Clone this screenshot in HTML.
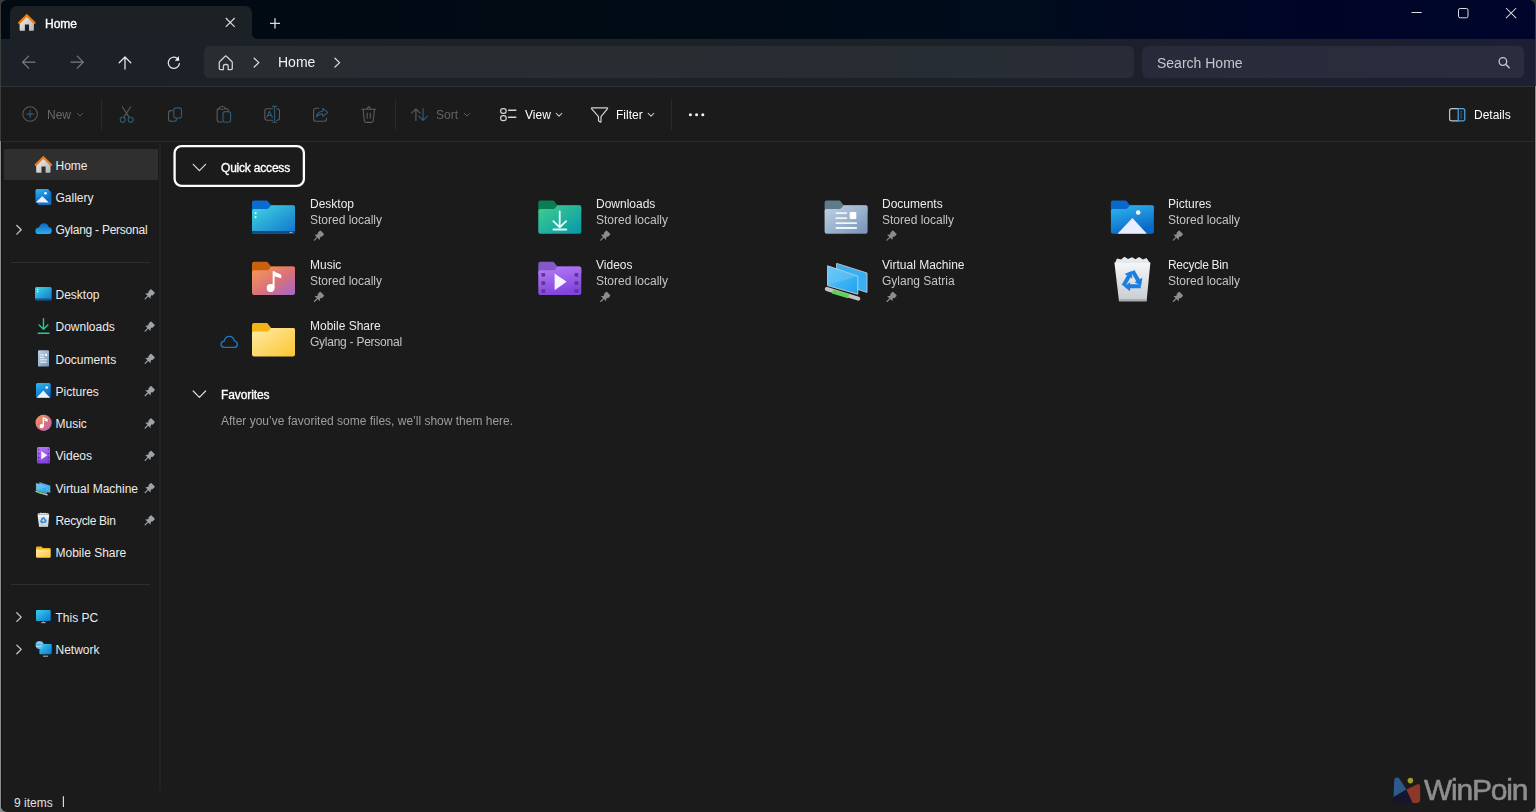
<!DOCTYPE html>
<html><head><meta charset="utf-8">
<style>
*{margin:0;padding:0;box-sizing:border-box}
html,body{width:1536px;height:812px;overflow:hidden;background:#8c8c8c;font-family:"Liberation Sans",sans-serif;color:#fff}
#win{position:absolute;left:0;top:0;width:1536px;height:812px;clip-path:inset(0 1px 0 1px round 6px);background:#1b1b1b}
.a{position:absolute}
.t{position:absolute;white-space:nowrap;font-size:12px;line-height:12px;will-change:transform}
.ct{will-change:auto}
#title{left:0;top:0;width:1536px;height:39px;background:linear-gradient(90deg,#020a12 0%,#010b15 40%,#000c1c 66%,#000528 86%,#01052c 100%)}
#nav{left:0;top:39px;width:1536px;height:47px;background:linear-gradient(90deg,#1b2126 0%,#1c2227 40%,#1d2129 66%,#1d202e 86%,#1d2033 100%)}
#tab{left:10px;top:6px;width:242px;height:34px;border-radius:7px 7px 0 0;background:#1c2126}
#tabfoot{left:252px;top:34px;width:5px;height:5px;background:radial-gradient(circle at 100% 0,transparent 4.5px,#1c2126 5px)}
#sep1{left:0;top:86px;width:1536px;height:1px;background:#2e3136}
#sep2{left:0;top:141px;width:1536px;height:1px;background:#2a2a2a}
#addr{left:204px;top:46px;width:930px;height:32px;border-radius:6px;background:linear-gradient(90deg,#272d30 0%,#272d31 45%,#282d35 88%,#282c37 100%)}
#search{left:1142px;top:46px;width:382px;height:32px;border-radius:6px;background:linear-gradient(90deg,#272b39,#292d3e)}
#sbborder{left:159px;top:142px;width:2px;height:648px;background:#222}
.sel{left:4px;top:149px;width:154px;height:31px;border-radius:1px;background:#2f2f2f}
.hsep{left:11px;width:139px;height:1px;background:#2e2e2e}
.st{color:#ececec}
.sub{color:#c4c4c4}
#lb{left:0;top:0;width:1px;height:812px;background:#5a5a5a}
#rb{left:1535px;top:0;width:1px;height:812px;background:#4a4a4a}
</style></head>
<body>
<div class="a" style="left:0;top:0;width:10px;height:141px;background:#3c3c3c"></div><div class="a" style="left:1526px;top:0;width:10px;height:86px;background:#383838"></div>
<div id="win">
<div id="title" class="a"></div>
<div id="nav" class="a"></div>
<div id="tab" class="a"></div>
<div id="tabfoot" class="a"></div>
<div id="sep1" class="a"></div>
<div id="sep2" class="a"></div>
<div id="addr" class="a"></div>
<div id="search" class="a"></div>
<div id="sbborder" class="a"></div>
<div class="a sel"></div>
<div class="a hsep" style="top:262px"></div>
<div class="a hsep" style="top:584px"></div>
<div class="t" style="left:45px;top:17.6px;-webkit-text-stroke:0.35px #fff">Home</div>
<div class="t" style="left:278px;top:55px;font-size:14px;line-height:14px;color:#f0f0f0">Home</div>
<div class="t" style="left:1157px;top:55.5px;font-size:14px;line-height:14px;color:#c6c8cc">Search Home</div>
<div class="t " style="left:47px;top:109.4px;color:#6a6a6a">New</div>
<div class="t " style="left:435.5px;top:109.4px;color:#646464">Sort</div>
<div class="t " style="left:524.5px;top:109.4px;">View</div>
<div class="t " style="left:615.5px;top:109.4px;">Filter</div>
<div class="t " style="left:1473.5px;top:109.4px;">Details</div>
<div class="t st ct" style="left:55.5px;top:159.7px;">Home</div>
<div class="t st ct" style="left:55.5px;top:192.0px;">Gallery</div>
<div class="t st ct" style="left:55.5px;top:224.3px;;letter-spacing:-0.25px">Gylang - Personal</div>
<div class="t st ct" style="left:55.5px;top:288.9px;">Desktop</div>
<div class="t st ct" style="left:55.5px;top:321.2px;">Downloads</div>
<div class="t st ct" style="left:55.5px;top:353.5px;">Documents</div>
<div class="t st ct" style="left:55.5px;top:385.8px;">Pictures</div>
<div class="t st ct" style="left:55.5px;top:418.1px;">Music</div>
<div class="t st ct" style="left:55.5px;top:450.4px;">Videos</div>
<div class="t st ct" style="left:55.5px;top:482.7px;">Virtual Machine</div>
<div class="t st ct" style="left:55.5px;top:515.0px;;letter-spacing:-0.3px">Recycle Bin</div>
<div class="t st ct" style="left:55.5px;top:547.3px;">Mobile Share</div>
<div class="t st ct" style="left:55.5px;top:611.9px;">This PC</div>
<div class="t st ct" style="left:55.5px;top:644.2px;">Network</div>
<div class="t " style="left:221px;top:161.6px;-webkit-text-stroke:0.35px #fff;letter-spacing:-0.2px">Quick access</div>
<div class="t st" style="left:309.5px;top:197.5px;">Desktop</div>
<div class="t sub" style="left:309.5px;top:213.7px;">Stored locally</div>
<div class="t st" style="left:595.8px;top:197.5px;">Downloads</div>
<div class="t sub" style="left:595.8px;top:213.7px;">Stored locally</div>
<div class="t st" style="left:882.1px;top:197.5px;">Documents</div>
<div class="t sub" style="left:882.1px;top:213.7px;">Stored locally</div>
<div class="t st" style="left:1168.4px;top:197.5px;">Pictures</div>
<div class="t sub" style="left:1168.4px;top:213.7px;">Stored locally</div>
<div class="t st" style="left:309.5px;top:258.8px;">Music</div>
<div class="t sub" style="left:309.5px;top:275.0px;">Stored locally</div>
<div class="t st" style="left:595.8px;top:258.8px;">Videos</div>
<div class="t sub" style="left:595.8px;top:275.0px;">Stored locally</div>
<div class="t st" style="left:882.1px;top:258.8px;">Virtual Machine</div>
<div class="t sub" style="left:882.1px;top:275.0px;">Gylang Satria</div>
<div class="t st" style="left:1168.4px;top:258.8px;;letter-spacing:-0.3px">Recycle Bin</div>
<div class="t sub" style="left:1168.4px;top:275.0px;">Stored locally</div>
<div class="t st" style="left:309.5px;top:320.1px;">Mobile Share</div>
<div class="t sub" style="left:309.5px;top:336.3px;;letter-spacing:-0.25px">Gylang - Personal</div>
<div class="t " style="left:221px;top:388.6px;-webkit-text-stroke:0.35px #fff;letter-spacing:-0.1px">Favorites</div>
<div class="t " style="left:221px;top:414.5px;color:#9d9d9d">After you’ve favorited some files, we’ll show them here.</div>
<div class="t ct" style="left:14px;top:796.6px;color:#e0e0e0">9 items</div>
<div class="t" style="left:1424px;top:775px;font-size:30px;line-height:30px;color:#8e8e8e;letter-spacing:-1.2px;-webkit-text-stroke:0.6px #8e8e8e">WinPoin</div>
<svg class="a" style="left:0;top:0" width="1536" height="812" viewBox="0 0 1536 812">
<defs>
<linearGradient id="gHouse" x1="0" y1="0" x2="1" y2="1"><stop offset="0" stop-color="#f0f0f0"/><stop offset="1" stop-color="#b4b4b4"/></linearGradient>
<linearGradient id="gDesk" x1="0" y1="0" x2="1" y2="1"><stop offset="0" stop-color="#3fd8e2"/><stop offset="1" stop-color="#1272cc"/></linearGradient>
<linearGradient id="gDown" x1="0" y1="0" x2="1" y2="1"><stop offset="0" stop-color="#3fd08e"/><stop offset="1" stop-color="#0796aa"/></linearGradient>
<linearGradient id="gDoc" x1="0" y1="0" x2="1" y2="1"><stop offset="0" stop-color="#c2d4e6"/><stop offset="1" stop-color="#7593b6"/></linearGradient>
<linearGradient id="gPic" x1="0" y1="0" x2="0.4" y2="1"><stop offset="0" stop-color="#31b8f0"/><stop offset="1" stop-color="#0868c8"/></linearGradient>
<linearGradient id="gMus" x1="0" y1="0" x2="1" y2="1"><stop offset="0" stop-color="#fa9b52"/><stop offset="0.55" stop-color="#d8727a"/><stop offset="1" stop-color="#a266cc"/></linearGradient>
<linearGradient id="gVid" x1="0" y1="0" x2="0.3" y2="1"><stop offset="0" stop-color="#b87ef6"/><stop offset="1" stop-color="#8244de"/></linearGradient>
<linearGradient id="gYel" x1="0" y1="0" x2="1" y2="1"><stop offset="0" stop-color="#ffeaa8"/><stop offset="1" stop-color="#fbc630"/></linearGradient>
<linearGradient id="gCloud" x1="0" y1="0" x2="0" y2="1"><stop offset="0" stop-color="#0c66c4"/><stop offset="1" stop-color="#2cb0f0"/></linearGradient>
<linearGradient id="gPC" x1="0" y1="0" x2="1" y2="1"><stop offset="0" stop-color="#3ad0ec"/><stop offset="1" stop-color="#0a78d2"/></linearGradient>
<linearGradient id="gVM" x1="0" y1="0" x2="1" y2="1"><stop offset="0" stop-color="#62c4f8"/><stop offset="1" stop-color="#1ea4f0"/></linearGradient>
<linearGradient id="gBin" x1="0" y1="0" x2="0" y2="1"><stop offset="0" stop-color="#f4f6f8"/><stop offset="1" stop-color="#c8ccd0"/></linearGradient>
</defs>
<g transform="translate(0,0)"><path d="M19.6 22.6 L26.8 16 L33.9 22.6 V30 Q33.9 30.8 33.1 30.8 H29 V24.6 H24.9 V30.8 H20.4 Q19.6 30.8 19.6 30 Z" fill="url(#gHouse)"/><path d="M19.2 22.9 L26.8 15.3 L34.4 22.9" fill="none" stroke="#f07a12" stroke-width="2.3" stroke-linecap="round" stroke-linejoin="round"/></g>
<path d="M225.8 18 L234.7 26.9 M234.7 18 L225.8 26.9" stroke="#dcdcdc" fill="none" stroke-width="1.15"/>
<path d="M270 23.4 H280 M275 18.3 V28.5" stroke="#dcdcdc" fill="none" stroke-width="1.3"/>
<path d="M1411.5 12.5 H1421.7" stroke="#dcdcdc" fill="none" stroke-width="1"/>
<rect x="1458.5" y="8.5" width="9.5" height="9.3" rx="1.6" stroke="#dcdcdc" fill="none" stroke-width="1"/>
<path d="M1506 8 L1516.2 18.2 M1516.2 8 L1506 18.2" stroke="#dcdcdc" fill="none" stroke-width="1.05"/>
<path d="M22.6 62.2 H35 M28.6 56.2 L22.6 62.2 L28.6 68.2" stroke="#7a7e84" stroke-width="1.2" fill="none" stroke-linecap="round" stroke-linejoin="round"/>
<path d="M71 62.2 H83.3 M77.3 56.2 L83.3 62.2 L77.3 68.2" stroke="#7a7e84" stroke-width="1.2" fill="none" stroke-linecap="round" stroke-linejoin="round"/>
<path d="M125 69 V57 M119.2 62.8 L125 57 L130.8 62.8" stroke="#e4e4e4" stroke-width="1.3" fill="none" stroke-linecap="round" stroke-linejoin="round"/>
<path d="M179.4 63.6 A5.6 5.6 0 1 1 176.7 58.0" stroke="#e4e4e4" stroke-width="1.3" fill="none" stroke-linecap="round" stroke-linejoin="round"/>
<path d="M178.7 56 L179.3 60.7 L174.8 60.7 Z" fill="#f0f0f0"/>
<path d="M219.3 68.6 V62.5 Q219.3 61.9 219.8 61.5 L225.2 56.2 Q225.8 55.7 226.4 56.2 L231.8 61.5 Q232.3 61.9 232.3 62.5 V68.6 Q232.3 69.7 231.2 69.7 H228.2 V66.3 Q228.2 64.5 226.4 64.5 H225.2 Q223.4 64.5 223.4 66.3 V69.7 H220.4 Q219.3 69.7 219.3 68.6 Z" stroke="#cfd2d4" stroke-width="1.3" fill="none" stroke-linecap="round" stroke-linejoin="round"/>
<path d="M254.2 58.2 L258.8 62.6 L254.2 67" stroke="#dcdcdc" stroke-width="1.3" fill="none" stroke-linecap="round" stroke-linejoin="round"/>
<path d="M335 58.2 L339.6 62.6 L335 67" stroke="#dcdcdc" stroke-width="1.3" fill="none" stroke-linecap="round" stroke-linejoin="round"/>
<circle cx="1502.9" cy="61.5" r="3.8" stroke="#cacaca" stroke-width="1.3" fill="none"/><path d="M1505.7 64.3 L1509.2 67.8" stroke="#cacaca" stroke-width="1.4" fill="none" stroke-linecap="round" stroke-linejoin="round"/>
<circle cx="30.1" cy="114" r="7.3" stroke="#5b5b5b" stroke-width="1.05" fill="none"/><path d="M26.8 114 H33.4 M30.1 110.7 V117.3" stroke="#2d5b7a" stroke-width="1.25" fill="none" stroke-linecap="round" stroke-linejoin="round"/>
<path d="M77.4 113.4 L80 116 L82.6 113.4" stroke="#5b5b5b" stroke-width="1" fill="none" stroke-linecap="round" stroke-linejoin="round"/>
<rect x="101" y="99" width="1" height="31" fill="#2a2a2a"/><rect x="395" y="99" width="1" height="31" fill="#2a2a2a"/><rect x="671" y="99" width="1" height="31" fill="#2a2a2a"/>
<path d="M122.3 106.8 L129.2 117.4 M130.7 106.8 L123.8 117.4" stroke="#5b5b5b" stroke-width="1.1" fill="none" stroke-linecap="round" stroke-linejoin="round"/><circle cx="122.7" cy="119.7" r="2.5" stroke="#2d5b7a" stroke-width="1.15" fill="none"/><circle cx="130.7" cy="119.7" r="2.5" stroke="#2d5b7a" stroke-width="1.15" fill="none"/>
<path d="M172.2 110.6 H170.9 Q168.6 110.6 168.6 112.9 V119 Q168.6 121.3 170.9 121.3 H174.4 Q176.4 121.3 176.6 119.4" stroke="#5b5b5b" stroke-width="1.1" fill="none" stroke-linecap="round" stroke-linejoin="round"/><rect x="173.8" y="107.8" width="7.7" height="10.3" rx="2.2" stroke="#2d5b7a" stroke-width="1.15" fill="none"/>
<path d="M219.7 108.6 H219.3 Q217.1 108.6 217.1 110.8 V119.8 Q217.1 122 219.3 122 H222.2 M224.6 108.6 H226.4 Q228.4 108.6 228.5 110.6" stroke="#5b5b5b" stroke-width="1.1" fill="none" stroke-linecap="round" stroke-linejoin="round"/><rect x="219.4" y="106.6" width="5.4" height="2.6" rx="1.3" stroke="#5b5b5b" stroke-width="1" fill="none"/><rect x="223" y="111.6" width="7.6" height="10.7" rx="2.2" stroke="#2d5b7a" stroke-width="1.15" fill="none"/>
<path d="M272.6 108.8 H267 Q264.8 108.8 264.8 111 V118 Q264.8 120.2 267 120.2 H272.6 M276.7 108.8 H277.3 Q279.5 108.8 279.5 111 V118 Q279.5 120.2 277.3 120.2 H276.7" stroke="#5b5b5b" stroke-width="1.1" fill="none" stroke-linecap="round" stroke-linejoin="round"/><path d="M274.6 106.4 V122.2 M272.6 106.4 H276.6 M272.6 122.2 H276.6 M266.6 117.4 L269.5 111.2 L272.4 117.4 M267.7 115.4 H271.3" stroke="#2d5b7a" stroke-width="1.1" fill="none" stroke-linecap="round" stroke-linejoin="round"/>
<path d="M318.8 108.3 H316 Q313.6 108.3 313.6 110.7 V118.9 Q313.6 121.3 316 121.3 H324 Q326.4 121.3 326.4 118.9 V118" stroke="#5b5b5b" stroke-width="1.1" fill="none" stroke-linecap="round" stroke-linejoin="round"/><path d="M316.3 117 Q317.2 111.6 322.8 111.3 V108.3 L327.7 112.5 L322.8 116.6 V113.9 Q318.8 113.8 316.3 117 Z" stroke="#2d5b7a" stroke-width="1.05" fill="none" stroke-linecap="round" stroke-linejoin="round"/>
<path d="M361.9 109.3 H375.6 M366.6 109.1 L368.8 106.6 L371 109.1 M363.2 109.6 L364.3 120.8 Q364.5 122.4 366 122.4 H371.6 Q373.1 122.4 373.3 120.8 L374.4 109.6 M367.2 113 V118.2 M370.3 113 V118.2" stroke="#5b5b5b" stroke-width="1.1" fill="none" stroke-linecap="round" stroke-linejoin="round"/>
<path d="M415.9 120.5 V108.8 M411.6 113.1 L415.9 108.8 L420.2 113.1" stroke="#5b5b5b" stroke-width="1.2" fill="none" stroke-linecap="round" stroke-linejoin="round"/><path d="M423.1 108.6 V120.4 M418.8 116.1 L423.1 120.4 L427.4 116.1" stroke="#2d5b7a" stroke-width="1.2" fill="none" stroke-linecap="round" stroke-linejoin="round"/><path d="M464.4 113.4 L467 116 L469.6 113.4" stroke="#5b5b5b" stroke-width="1" fill="none" stroke-linecap="round" stroke-linejoin="round"/>
<rect x="500.6" y="108.6" width="5.6" height="4.8" rx="2.4" stroke="#d4d4d4" stroke-width="1.2" fill="none"/><rect x="500.6" y="115.7" width="5.6" height="4.9" rx="2.45" stroke="#d4d4d4" stroke-width="1.2" fill="none"/><path d="M508.6 110.2 H515.8 M508.6 117.2 H515.8" stroke="#d4d4d4" stroke-width="1.5" fill="none" stroke-linecap="round" stroke-linejoin="round"/><path d="M556.2 113.4 L559 116.1 L561.8 113.4" stroke="#c8c8c8" stroke-width="1.05" fill="none" stroke-linecap="round" stroke-linejoin="round"/>
<path d="M592 107.9 H607 Q608.1 107.9 607.4 108.8 L601 116.6 V121.6 Q601 122.6 600.1 122 L598.5 120.8 V116.6 L591.7 108.8 Q591 107.9 592 107.9 Z" stroke="#d4d4d4" stroke-width="1.2" fill="none" stroke-linecap="round" stroke-linejoin="round"/><path d="M648.2 113.4 L651 116.1 L653.8 113.4" stroke="#c8c8c8" stroke-width="1.05" fill="none" stroke-linecap="round" stroke-linejoin="round"/>
<circle cx="690.4" cy="114.8" r="1.55" fill="#f2f2f2"/><circle cx="696.6" cy="114.8" r="1.55" fill="#f2f2f2"/><circle cx="702.8" cy="114.8" r="1.55" fill="#f2f2f2"/>
<path d="M1458.2 108.6 H1451.7 Q1449.6 108.6 1449.6 110.7 V118.7 Q1449.6 120.8 1451.7 120.8 H1458.2" stroke="#c4c4c4" stroke-width="1.2" fill="none" stroke-linecap="round" stroke-linejoin="round"/><path d="M1458.2 108.6 H1462.7 Q1464.8 108.6 1464.8 110.7 V118.7 Q1464.8 120.8 1462.7 120.8 H1458.2 Z" stroke="#4aa6e6" stroke-width="1.2" fill="none" stroke-linecap="round" stroke-linejoin="round"/><path d="M1460.4 111.8 H1462.2 M1460.4 113.8 H1462.2 M1460.4 115.8 H1462.2 M1460.4 117.8 H1462.2" stroke="#3a86c0" stroke-width="0.8"/>
<g transform="translate(16.6,142)"><path d="M19.6 22.6 L26.8 16 L33.9 22.6 V30 Q33.9 30.8 33.1 30.8 H29 V24.6 H24.9 V30.8 H20.4 Q19.6 30.8 19.6 30 Z" fill="url(#gHouse)"/><path d="M19.2 22.9 L26.8 15.3 L34.4 22.9" fill="none" stroke="#f07a12" stroke-width="2.3" stroke-linecap="round" stroke-linejoin="round"/></g>
<rect x="37.6" y="191" width="13.8" height="14" rx="1.6" fill="#1c6cc0"/><rect x="35.5" y="189" width="13.7" height="13.7" rx="1.6" fill="url(#gPic)"/><path d="M35.8 202.6 L42.3 196.2 L48.9 202.6 Z" fill="#eef4ff"/><circle cx="45.5" cy="193.2" r="1.3" fill="#ffffff"/>
<path d="M38.8 234.1 Q35.4 234.1 35.4 230.9 Q35.4 227.7 38.9 227.5 Q40.2 223.2 44.1 223.2 Q47.6 223.2 48.6 226.9 Q51.8 227.3 51.8 230.6 Q51.8 234.1 48.4 234.1 Z" fill="url(#gCloud)"/>
<path d="M16.8 225.5 L21.2 229.8 L16.8 234.10000000000002" stroke="#c8c8c8" stroke-width="1.3" fill="none" stroke-linecap="round" stroke-linejoin="round"/>
<path d="M16.8 612.8000000000001 L21.2 617.1 L16.8 621.4" stroke="#c8c8c8" stroke-width="1.3" fill="none" stroke-linecap="round" stroke-linejoin="round"/>
<path d="M16.8 645.1 L21.2 649.4 L16.8 653.6999999999999" stroke="#c8c8c8" stroke-width="1.3" fill="none" stroke-linecap="round" stroke-linejoin="round"/>
<rect x="35" y="287" width="16.7" height="13.2" rx="1.5" fill="url(#gDesk)"/><rect x="35" y="298.4" width="16.7" height="1.8" fill="#0d5b9a"/><rect x="37" y="289" width="1.3" height="1.1" fill="#fff"/><rect x="37" y="291.2" width="1.3" height="1.1" fill="#fff"/>
<path d="M43.5 318.6 V329.2 M39.2 325 L43.5 329.3 L47.8 325" stroke="#2cc69c" stroke-width="1.4" fill="none" stroke-linecap="round" stroke-linejoin="round"/><path d="M38.3 333.2 H48.9" stroke="#2cc69c" stroke-width="1.6" stroke-linecap="round"/>
<rect x="38" y="350.2" width="11" height="16.4" rx="1.2" fill="url(#gDoc)"/><path d="M40.2 355 H44.2 M40.2 357.4 H44.2 M40.2 359.8 H46.8 M40.2 362.2 H46.8" stroke="#f4f6fa" stroke-width="1"/><rect x="45.2" y="353.8" width="1.8" height="2.2" fill="#fff"/>
<rect x="36" y="383" width="14.7" height="14.8" rx="1.6" fill="url(#gPic)"/><path d="M36.6 397.8 L43.3 390.4 L50.1 397.8 Z" fill="#eef4ff"/><circle cx="46.7" cy="387.5" r="1.3" fill="#fff"/>
<circle cx="43.6" cy="422.85" r="8.1" fill="url(#gMus)"/><circle cx="41.7" cy="426.2" r="2.1" fill="#fff"/><path d="M43.3 426 V417.8 L47 419.4 V421 L44.6 420.2" stroke="#fff" stroke-width="1.3" fill="none" stroke-linejoin="round"/>
<rect x="37" y="447" width="13" height="16.4" rx="1.5" fill="url(#gVid)"/><rect x="38" y="448.9" width="1.2" height="1.2" fill="#4e2c90"/><rect x="47.8" y="448.9" width="1.2" height="1.2" fill="#4e2c90"/><rect x="38" y="452.9" width="1.2" height="1.2" fill="#4e2c90"/><rect x="47.8" y="452.9" width="1.2" height="1.2" fill="#4e2c90"/><rect x="38" y="456.9" width="1.2" height="1.2" fill="#4e2c90"/><rect x="47.8" y="456.9" width="1.2" height="1.2" fill="#4e2c90"/><rect x="38" y="460.59999999999997" width="1.2" height="1.2" fill="#4e2c90"/><rect x="47.8" y="460.59999999999997" width="1.2" height="1.2" fill="#4e2c90"/><path d="M41.2 451 V459.6 L47.3 455.3 Z" fill="#f4f0ff"/>
<path d="M36 547.8 Q36 546.4 37.4 546.4 H41.4 L43 548 H49.3 Q50.7 548 50.7 549.4 V550 H36 Z" fill="#f2b31a"/><path d="M36 549.4 H50.7 V556.5 Q50.7 557.7 49.5 557.7 H37.2 Q36 557.7 36 556.5 Z" fill="url(#gYel)"/>
<rect x="36" y="610" width="14.7" height="11" rx="1" fill="url(#gPC)"/><path d="M41.2 622.6 H45.6" stroke="#9aa4ac" stroke-width="1.2"/><path d="M43.4 621 V622.4" stroke="#7a8a96" stroke-width="1"/>
<rect x="39.4" y="644" width="12.3" height="10.2" rx="1" fill="url(#gPC)"/><path d="M43 656.2 H48" stroke="#9aa4ac" stroke-width="1.2"/><circle cx="39.6" cy="645" r="4.1" fill="#5ab8e8"/><path d="M37 643 Q39.5 641.5 42 644 M36.2 646 Q39 647.2 41.5 646" stroke="#d8f0ff" stroke-width="0.7" fill="none"/>
<g transform="translate(153.05,290.90000000000003) rotate(45)"><path d="M-2.9 0.8 Q-2.9 0 -2.1 0 H2.1 Q2.9 0 2.9 0.8 V3.6 L2 4.3 V5.3 L3.7 7.3 H-3.7 L-2 5.3 V4.3 L-2.9 3.6 Z" fill="#9ca4ab"/><path d="M0 7 V11.2" stroke="#9ca4ab" stroke-width="1.15" stroke-linecap="round"/></g>
<g transform="translate(153.05,323.2) rotate(45)"><path d="M-2.9 0.8 Q-2.9 0 -2.1 0 H2.1 Q2.9 0 2.9 0.8 V3.6 L2 4.3 V5.3 L3.7 7.3 H-3.7 L-2 5.3 V4.3 L-2.9 3.6 Z" fill="#9ca4ab"/><path d="M0 7 V11.2" stroke="#9ca4ab" stroke-width="1.15" stroke-linecap="round"/></g>
<g transform="translate(153.05,355.5) rotate(45)"><path d="M-2.9 0.8 Q-2.9 0 -2.1 0 H2.1 Q2.9 0 2.9 0.8 V3.6 L2 4.3 V5.3 L3.7 7.3 H-3.7 L-2 5.3 V4.3 L-2.9 3.6 Z" fill="#9ca4ab"/><path d="M0 7 V11.2" stroke="#9ca4ab" stroke-width="1.15" stroke-linecap="round"/></g>
<g transform="translate(153.05,387.8) rotate(45)"><path d="M-2.9 0.8 Q-2.9 0 -2.1 0 H2.1 Q2.9 0 2.9 0.8 V3.6 L2 4.3 V5.3 L3.7 7.3 H-3.7 L-2 5.3 V4.3 L-2.9 3.6 Z" fill="#9ca4ab"/><path d="M0 7 V11.2" stroke="#9ca4ab" stroke-width="1.15" stroke-linecap="round"/></g>
<g transform="translate(153.05,420.09999999999997) rotate(45)"><path d="M-2.9 0.8 Q-2.9 0 -2.1 0 H2.1 Q2.9 0 2.9 0.8 V3.6 L2 4.3 V5.3 L3.7 7.3 H-3.7 L-2 5.3 V4.3 L-2.9 3.6 Z" fill="#9ca4ab"/><path d="M0 7 V11.2" stroke="#9ca4ab" stroke-width="1.15" stroke-linecap="round"/></g>
<g transform="translate(153.05,452.40000000000003) rotate(45)"><path d="M-2.9 0.8 Q-2.9 0 -2.1 0 H2.1 Q2.9 0 2.9 0.8 V3.6 L2 4.3 V5.3 L3.7 7.3 H-3.7 L-2 5.3 V4.3 L-2.9 3.6 Z" fill="#9ca4ab"/><path d="M0 7 V11.2" stroke="#9ca4ab" stroke-width="1.15" stroke-linecap="round"/></g>
<g transform="translate(153.05,484.7) rotate(45)"><path d="M-2.9 0.8 Q-2.9 0 -2.1 0 H2.1 Q2.9 0 2.9 0.8 V3.6 L2 4.3 V5.3 L3.7 7.3 H-3.7 L-2 5.3 V4.3 L-2.9 3.6 Z" fill="#9ca4ab"/><path d="M0 7 V11.2" stroke="#9ca4ab" stroke-width="1.15" stroke-linecap="round"/></g>
<g transform="translate(153.05,516.9999999999999) rotate(45)"><path d="M-2.9 0.8 Q-2.9 0 -2.1 0 H2.1 Q2.9 0 2.9 0.8 V3.6 L2 4.3 V5.3 L3.7 7.3 H-3.7 L-2 5.3 V4.3 L-2.9 3.6 Z" fill="#9ca4ab"/><path d="M0 7 V11.2" stroke="#9ca4ab" stroke-width="1.15" stroke-linecap="round"/></g>
<rect x="174.6" y="146.1" width="129.3" height="39.8" rx="7" stroke="#ffffff" stroke-width="2.3" fill="none"/>
<path d="M193.2 164.3 L199.4 170.6 L205.6 164.3" stroke="#dcdcdc" stroke-width="1.2" fill="none" stroke-linecap="round" stroke-linejoin="round"/>
<path d="M193.2 391 L199.4 397.3 L205.6 391" stroke="#dcdcdc" stroke-width="1.2" fill="none" stroke-linecap="round" stroke-linejoin="round"/>
<g transform="translate(252,200.5)"><path d="M0 2 Q0 0 2 0 H14.6 Q15.4 0 15.9 0.7 L19 4.8 H41 Q43 4.8 43 6.8 V12 H0 Z" fill="#0a6ad0"/><path d="M0 10.4 Q0 8.4 2 8.4 H15.4 Q16.4 8.4 17 7.6 L19 4.8 H41 Q43 4.8 43 6.8 V31.3 Q43 33.3 41 33.3 H2 Q0 33.3 0 31.3 Z" fill="url(#gDesk)"/><path d="M0 30.6 H43 V31.3 Q43 33.3 41 33.3 H2 Q0 33.3 0 31.3 Z" fill="#0c4e86"/><circle cx="3.6" cy="12.6" r="1.05" fill="#e6f8ff"/><circle cx="3.6" cy="16.6" r="1.05" fill="#e6f8ff"/><rect x="37.5" y="31.4" width="2.8" height="0.9" fill="#a8c8e0"/></g>
<g transform="translate(538.3,200.5)"><path d="M0 2 Q0 0 2 0 H14.6 Q15.4 0 15.9 0.7 L19 4.8 H41 Q43 4.8 43 6.8 V12 H0 Z" fill="#0a7e52"/><path d="M0 10.4 Q0 8.4 2 8.4 H15.4 Q16.4 8.4 17 7.6 L19 4.8 H41 Q43 4.8 43 6.8 V31.3 Q43 33.3 41 33.3 H2 Q0 33.3 0 31.3 Z" fill="url(#gDown)"/><path d="M21.4 11 V26.2 M15 20.6 L21.4 26.8 L27.8 20.6" stroke="#f2fbf8" stroke-width="1.8" fill="none" stroke-linecap="round" stroke-linejoin="round"/><path d="M15.1 29 H28" stroke="#e4f6f2" stroke-width="1.9" stroke-linecap="round"/></g>
<g transform="translate(824.6,200.5)"><path d="M0 2 Q0 0 2 0 H14.6 Q15.4 0 15.9 0.7 L19 4.8 H41 Q43 4.8 43 6.8 V12 H0 Z" fill="#5d7b89"/><path d="M0 10.4 Q0 8.4 2 8.4 H15.4 Q16.4 8.4 17 7.6 L19 4.8 H41 Q43 4.8 43 6.8 V31.3 Q43 33.3 41 33.3 H2 Q0 33.3 0 31.3 Z" fill="url(#gDoc)"/><path d="M11.8 12.6 H21.7 M11.8 17.6 H21.7 M11.8 22.6 H31.6 M11.8 27.5 H31.6" stroke="#f2f4f8" stroke-width="1.9" stroke-linecap="round"/><rect x="25.1" y="11.6" width="6.6" height="6.8" rx="0.8" fill="#ffffff"/></g>
<g transform="translate(1110.9,200.5)"><path d="M0 2 Q0 0 2 0 H14.6 Q15.4 0 15.9 0.7 L19 4.8 H41 Q43 4.8 43 6.8 V12 H0 Z" fill="#0a68ca"/><path d="M0 10.4 Q0 8.4 2 8.4 H15.4 Q16.4 8.4 17 7.6 L19 4.8 H41 Q43 4.8 43 6.8 V31.3 Q43 33.3 41 33.3 H2 Q0 33.3 0 31.3 Z" fill="url(#gPic)"/><path d="M6.6 33.3 L21.5 17.6 L36 33.3 Z" fill="#e8eeff"/><circle cx="27.3" cy="12" r="2.3" fill="#fbf8f2"/></g>
<g transform="translate(252,261.8)"><path d="M0 2 Q0 0 2 0 H14.6 Q15.4 0 15.9 0.7 L19 4.8 H41 Q43 4.8 43 6.8 V12 H0 Z" fill="#c8600e"/><path d="M0 10.4 Q0 8.4 2 8.4 H15.4 Q16.4 8.4 17 7.6 L19 4.8 H41 Q43 4.8 43 6.8 V31.3 Q43 33.3 41 33.3 H2 Q0 33.3 0 31.3 Z" fill="url(#gMus)"/><circle cx="18.6" cy="26.2" r="3.9" fill="#fff"/><path d="M21.6 26 V9.6" stroke="#fff" stroke-width="1.9"/><path d="M20.8 9.2 L28.7 12.6 Q29.3 13 29.3 13.6 V16.4 L21.8 14.4 Z" fill="#fff"/></g>
<g transform="translate(538.3,261.8)"><path d="M0 2 Q0 0 2 0 H14.6 Q15.4 0 15.9 0.7 L19 4.8 H41 Q43 4.8 43 6.8 V12 H0 Z" fill="#8458c6"/><path d="M0 10.4 Q0 8.4 2 8.4 H15.4 Q16.4 8.4 17 7.6 L19 4.8 H41 Q43 4.8 43 6.8 V31.3 Q43 33.3 41 33.3 H2 Q0 33.3 0 31.3 Z" fill="url(#gVid)"/><rect x="3.1" y="11.2" width="3.8" height="3.8" rx="1" fill="#5b3798"/><rect x="3.1" y="19.4" width="3.8" height="3.8" rx="1" fill="#5b3798"/><rect x="3.1" y="27.4" width="3.8" height="3.8" rx="1" fill="#5b3798"/><rect x="36.2" y="11.2" width="3.8" height="3.8" rx="1" fill="#5b3798"/><rect x="36.2" y="19.4" width="3.8" height="3.8" rx="1" fill="#5b3798"/><rect x="36.2" y="27.4" width="3.8" height="3.8" rx="1" fill="#5b3798"/><path d="M16.3 11.6 V28.4 L28.3 20 Z" fill="#f6f2ff"/></g>
<g transform="translate(252,323.1)"><path d="M0 2 Q0 0 2 0 H14.6 Q15.4 0 15.9 0.7 L19 4.8 H41 Q43 4.8 43 6.8 V12 H0 Z" fill="#f4b416"/><path d="M0 10.4 Q0 8.4 2 8.4 H15.4 Q16.4 8.4 17 7.6 L19 4.8 H41 Q43 4.8 43 6.8 V31.3 Q43 33.3 41 33.3 H2 Q0 33.3 0 31.3 Z" fill="url(#gYel)"/></g>
<path d="M836.6 263.4 L867 273 V292.4 L836.6 282.6 Z" fill="#38b0f4" stroke="#b8c0c8" stroke-width="1"/><path d="M827.6 265.8 L857.8 276.2 V294.2 L827.6 285.6 Z" fill="url(#gVM)" stroke="#c0c8d0" stroke-width="1"/><path d="M827.6 265.8 L857.8 276.2 L827.6 285 Z" fill="#7ed0fa" opacity="0.35"/><path d="M826.8 289 L858.3 298.6" stroke="#c4c4c4" stroke-width="4" stroke-linecap="round"/><path d="M832.5 291.4 L848.5 296.2" stroke="#5cd45c" stroke-width="4.2"/>
<g transform="translate(35.7,482.3) scale(0.35) translate(-826,-263)"><path d="M836.6 263.4 L867 273 V292.4 L836.6 282.6 Z" fill="#38b0f4" stroke="#b8c0c8" stroke-width="1"/><path d="M827.6 265.8 L857.8 276.2 V294.2 L827.6 285.6 Z" fill="url(#gVM)" stroke="#c0c8d0" stroke-width="1"/><path d="M827.6 265.8 L857.8 276.2 L827.6 285 Z" fill="#7ed0fa" opacity="0.35"/><path d="M826.8 289 L858.3 298.6" stroke="#c4c4c4" stroke-width="4" stroke-linecap="round"/><path d="M832.5 291.4 L848.5 296.2" stroke="#5cd45c" stroke-width="4.2"/></g>
<path d="M1114.4 262.6 H1150.4 L1146.6 301.2 H1119 Z" fill="url(#gBin)"/><path d="M1115 263 L1117 258.4 L1121 259.6 L1124.5 256.8 L1128 259 L1132 257.2 L1135.5 259.2 L1139 257 L1143 259.4 L1146.5 258 L1150 263 Z" fill="#e6e9ec"/><path d="M1119.3 299 H1146.6 L1146.4 301.2 H1119.2 Z" fill="#a8acb0"/><g transform="translate(1132.3,281) scale(1.22)"><g transform="rotate(0)"><path d="M0.3 -8.2 L5.2 0.3" stroke="#1a7fe0" stroke-width="3.3" stroke-linecap="butt"/><path d="M7.3 3.6 L8.2 -2.6 L1.8 1.1 Z" fill="#1a7fe0"/></g><g transform="rotate(120)"><path d="M0.3 -8.2 L5.2 0.3" stroke="#1a7fe0" stroke-width="3.3" stroke-linecap="butt"/><path d="M7.3 3.6 L8.2 -2.6 L1.8 1.1 Z" fill="#1a7fe0"/></g><g transform="rotate(240)"><path d="M0.3 -8.2 L5.2 0.3" stroke="#1a7fe0" stroke-width="3.3" stroke-linecap="butt"/><path d="M7.3 3.6 L8.2 -2.6 L1.8 1.1 Z" fill="#1a7fe0"/></g></g>
<g transform="translate(37.5,512.5) scale(0.326) translate(-1114.3,-256.6)"><path d="M1114.4 262.6 H1150.4 L1146.6 301.2 H1119 Z" fill="url(#gBin)"/><path d="M1115 263 L1117 258.4 L1121 259.6 L1124.5 256.8 L1128 259 L1132 257.2 L1135.5 259.2 L1139 257 L1143 259.4 L1146.5 258 L1150 263 Z" fill="#e6e9ec"/><path d="M1119.3 299 H1146.6 L1146.4 301.2 H1119.2 Z" fill="#a8acb0"/><g transform="translate(1132.3,281) scale(1.22)"><g transform="rotate(0)"><path d="M0.3 -8.2 L5.2 0.3" stroke="#1a7fe0" stroke-width="3.3" stroke-linecap="butt"/><path d="M7.3 3.6 L8.2 -2.6 L1.8 1.1 Z" fill="#1a7fe0"/></g><g transform="rotate(120)"><path d="M0.3 -8.2 L5.2 0.3" stroke="#1a7fe0" stroke-width="3.3" stroke-linecap="butt"/><path d="M7.3 3.6 L8.2 -2.6 L1.8 1.1 Z" fill="#1a7fe0"/></g><g transform="rotate(240)"><path d="M0.3 -8.2 L5.2 0.3" stroke="#1a7fe0" stroke-width="3.3" stroke-linecap="butt"/><path d="M7.3 3.6 L8.2 -2.6 L1.8 1.1 Z" fill="#1a7fe0"/></g></g></g>
<g transform="translate(322.3,232.25) rotate(45)"><path d="M-2.9 0.8 Q-2.9 0 -2.1 0 H2.1 Q2.9 0 2.9 0.8 V3.6 L2 4.3 V5.3 L3.7 7.3 H-3.7 L-2 5.3 V4.3 L-2.9 3.6 Z" fill="#8c8c8c"/><path d="M0 7 V11.2" stroke="#8c8c8c" stroke-width="1.15" stroke-linecap="round"/></g>
<g transform="translate(608.5999999999999,232.25) rotate(45)"><path d="M-2.9 0.8 Q-2.9 0 -2.1 0 H2.1 Q2.9 0 2.9 0.8 V3.6 L2 4.3 V5.3 L3.7 7.3 H-3.7 L-2 5.3 V4.3 L-2.9 3.6 Z" fill="#8c8c8c"/><path d="M0 7 V11.2" stroke="#8c8c8c" stroke-width="1.15" stroke-linecap="round"/></g>
<g transform="translate(894.9,232.25) rotate(45)"><path d="M-2.9 0.8 Q-2.9 0 -2.1 0 H2.1 Q2.9 0 2.9 0.8 V3.6 L2 4.3 V5.3 L3.7 7.3 H-3.7 L-2 5.3 V4.3 L-2.9 3.6 Z" fill="#8c8c8c"/><path d="M0 7 V11.2" stroke="#8c8c8c" stroke-width="1.15" stroke-linecap="round"/></g>
<g transform="translate(1181.2,232.25) rotate(45)"><path d="M-2.9 0.8 Q-2.9 0 -2.1 0 H2.1 Q2.9 0 2.9 0.8 V3.6 L2 4.3 V5.3 L3.7 7.3 H-3.7 L-2 5.3 V4.3 L-2.9 3.6 Z" fill="#8c8c8c"/><path d="M0 7 V11.2" stroke="#8c8c8c" stroke-width="1.15" stroke-linecap="round"/></g>
<g transform="translate(322.3,293.55) rotate(45)"><path d="M-2.9 0.8 Q-2.9 0 -2.1 0 H2.1 Q2.9 0 2.9 0.8 V3.6 L2 4.3 V5.3 L3.7 7.3 H-3.7 L-2 5.3 V4.3 L-2.9 3.6 Z" fill="#8c8c8c"/><path d="M0 7 V11.2" stroke="#8c8c8c" stroke-width="1.15" stroke-linecap="round"/></g>
<g transform="translate(608.5999999999999,293.55) rotate(45)"><path d="M-2.9 0.8 Q-2.9 0 -2.1 0 H2.1 Q2.9 0 2.9 0.8 V3.6 L2 4.3 V5.3 L3.7 7.3 H-3.7 L-2 5.3 V4.3 L-2.9 3.6 Z" fill="#8c8c8c"/><path d="M0 7 V11.2" stroke="#8c8c8c" stroke-width="1.15" stroke-linecap="round"/></g>
<g transform="translate(894.9,293.55) rotate(45)"><path d="M-2.9 0.8 Q-2.9 0 -2.1 0 H2.1 Q2.9 0 2.9 0.8 V3.6 L2 4.3 V5.3 L3.7 7.3 H-3.7 L-2 5.3 V4.3 L-2.9 3.6 Z" fill="#8c8c8c"/><path d="M0 7 V11.2" stroke="#8c8c8c" stroke-width="1.15" stroke-linecap="round"/></g>
<g transform="translate(1181.2,293.55) rotate(45)"><path d="M-2.9 0.8 Q-2.9 0 -2.1 0 H2.1 Q2.9 0 2.9 0.8 V3.6 L2 4.3 V5.3 L3.7 7.3 H-3.7 L-2 5.3 V4.3 L-2.9 3.6 Z" fill="#8c8c8c"/><path d="M0 7 V11.2" stroke="#8c8c8c" stroke-width="1.15" stroke-linecap="round"/></g>
<path d="M224.3 347.4 Q221.1 347.4 221.1 344.3 Q221.1 341.3 224.2 341.1 Q225.2 336.3 229.3 336.3 Q233.4 336.3 234.3 340.8 Q237.3 341.2 237.3 344.2 Q237.3 347.4 234 347.4 Z" stroke="#1a78cc" stroke-width="1.35" fill="none" stroke-linejoin="round"/>
<rect x="62.8" y="796.2" width="1.2" height="10.8" fill="#d8d8d8"/>
<path d="M1394.2 780 Q1394.6 777.4 1397.4 777.6 Q1398.8 777.8 1399.6 779 L1406.4 789.4 L1393.6 797.2 Z" fill="#2c5a8a"/><path d="M1393.6 797.2 L1406.4 789.4 L1412.6 803 H1396.4 Q1393.6 803 1393.6 800.2 Z" fill="#15152e"/><path d="M1406.4 789.4 L1417.4 784.2 Q1420 783.4 1420.2 786.4 L1420.2 799.4 Q1420 802.8 1416.8 803 H1412.6 Z" fill="#8c3828"/><circle cx="1410.4" cy="780.6" r="2.8" fill="#a09c24"/>
</svg>
<div class="a" style="left:1px;top:141px;width:1px;height:671px;background:#121212"></div><div class="a" style="left:1534px;top:86px;width:1px;height:726px;background:#141414"></div>
</div>
</body></html>
